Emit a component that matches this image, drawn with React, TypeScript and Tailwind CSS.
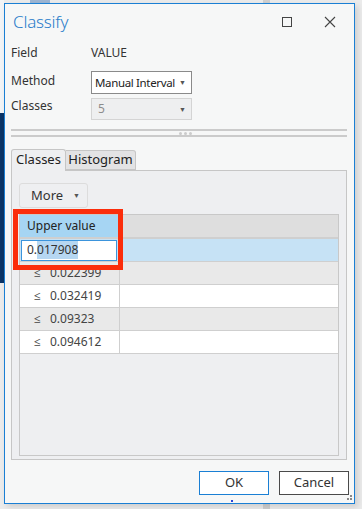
import React from "react";

const rows = [
  { v: "0.022399", bg: "bg-[#e9e9e9]" },
  { v: "0.032419", bg: "bg-white" },
  { v: "0.09323", bg: "bg-[#e9e9e9]" },
  { v: "0.094612", bg: "bg-white" },
];

const Caret = () => <span className="text-[7px] text-[#555] leading-none">▼</span>;

export default function App() {
  return (
    <div
      className="relative w-[362px] h-[509px] overflow-hidden bg-[#ebebeb] text-[12px] text-[#333]"
      style={{ fontFamily: '"Noto Sans", "Open Sans", sans-serif' }}
    >
      {/* desktop bits behind the window */}
      <div className="absolute left-0 top-0 w-[4px] h-[113px] bg-[#f2f4f6]" />
      <div className="absolute left-0 top-[113px] w-[4px] h-[170px] bg-[#0b3466]" />
      <div className="absolute left-[30px] top-0 w-[20px] h-[3px] bg-[#9cb5d3]" />
      <div className="absolute left-[263px] top-0 w-[7px] h-[3px] bg-[#cfcfcf]" />
      <div className="absolute left-[263px] top-[503px] w-[7px] h-[6px] bg-[#cfcfcf]" />

      {/* dialog window */}
      <div className="absolute left-[4px] top-[3px] w-[351px] h-[501px] border border-[#1a7fd4] bg-[#f6f7f7] shadow-[3px_3px_6px_rgba(0,0,0,0.12)] flex flex-col">
        {/* title bar */}
        <div className="flex items-center h-[35px] pl-[8px] pr-[15px]">
          <span className="text-[17px] text-[#2a7dca] font-light tracking-[-0.2px]">Classify</span>
          <div className="flex-1" />
          <div className="w-[10px] h-[10px] border border-[#444] mr-[32px]" />
          <svg width="12" height="12" viewBox="0 0 12 12" className="mr-[3px]">
            <path d="M1 1 L11 11 M11 1 L1 11" stroke="#444" strokeWidth="1.1" />
          </svg>
        </div>

        {/* form */}
        <div className="flex flex-col pl-[6px]">
          <div className="flex items-center h-[26px] mt-[1px]">
            <span className="w-[80px]">Field</span>
            <span>VALUE</span>
          </div>
          <div className="flex items-center h-[23px] mt-[5px]">
            <span className="w-[80px] -mt-[4px]">Method</span>
            <div className="w-[101px] h-[23px] border border-[#8a8a8a] bg-white flex items-center pl-[3px] pr-[5px] text-[#222] justify-between whitespace-nowrap">
              <span className="text-[11.5px] tracking-[-0.35px]">Manual Interval</span>
              <Caret />
            </div>
          </div>
          <div className="flex items-center h-[22px] mt-[4px]">
            <span className="w-[80px] -mt-[6px]">Classes</span>
            <div className="w-[101px] h-[22px] border border-[#d4d4d4] bg-[#eeeff0] flex items-center pl-[6px] pr-[5px] text-[#8c8c8c] justify-between">
              <span>5</span>
              <Caret />
            </div>
          </div>
        </div>

        {/* splitter */}
        <div className="flex flex-col ml-[6px] mr-[7px] mt-[9px]">
          <div className="h-[2px] bg-[#cbcbcb]" />
          <div className="h-[4px] flex items-center justify-center gap-[2px] pl-[12px]">
            <div className="w-[3px] h-[3px] rounded-full bg-[#cbcbcb]" />
            <div className="w-[3px] h-[3px] rounded-full bg-[#cbcbcb]" />
            <div className="w-[3px] h-[3px] rounded-full bg-[#cbcbcb]" />
          </div>
          <div className="h-[2px] bg-[#cbcbcb]" />
        </div>

        {/* tabs */}
        <div className="flex items-end ml-[6px] mt-[11px] h-[22px]">
          <div className="h-[22px] w-[55px] border border-b-0 border-[#c6c6c6] rounded-t-[3px] bg-[#eeeff1] flex items-center justify-center text-[13px] text-[#222] relative z-10 -mb-px pb-[1px]">
            Classes
          </div>
          <div className="h-[20px] w-[70px] border border-l-0 border-[#c6c6c6] rounded-tr-[3px] bg-[#e3e3e4] flex items-center justify-center text-[13px] text-[#222]">
            Histogram
          </div>
        </div>

        {/* tab panel */}
        <div className="ml-[6px] mr-[7px] h-[290px] border border-[#c6c6c6] bg-[#eeeff1] flex flex-col pl-[7px] pr-[7px] pt-[12px]">
          <div className="w-[69px] h-[25px] border border-[#dcdcdc] rounded-[3px] flex items-center pl-[11px] pr-[7px] justify-between text-[13px] text-[#333]">
            <span>More</span>
            <Caret />
          </div>

          <div className="mt-[6px] h-[242px] border border-[#c8c8c8] flex flex-col">
            <div className="flex h-[24px] border-b-2 border-[#cfcfcf]">
              <div className="w-[99px] bg-[#a6d5f3] flex items-center pl-[7px] text-[#222]">Upper value</div>
              <div className="flex-1 bg-[#dedede]" />
            </div>
            <div className="flex h-[23px] bg-[#c6e2f5] border-b border-[#cfcfcf]">
              <div className="w-[99px] flex items-center pl-[1px]">
                <div className="w-[96px] h-[21px] bg-white border border-[#3b94dc] flex items-center pl-[5px] text-[#333]">
                  <span>0.</span>
                  <span className="bg-[#b6d7f2]">017908</span>
                </div>
              </div>
            </div>
            {rows.map((r) => (
              <div key={r.v} className={`flex h-[23px] border-b border-[#cfcfcf] ${r.bg}`}>
                <div className="w-[100px] border-r border-[#cfcfcf] flex items-center pl-[14px] text-[#444]">
                  <span className="w-[16px]">≤</span>
                  <span>{r.v}</span>
                </div>
                <div className="flex-1" />
              </div>
            ))}
          </div>

          {/* annotation box */}
          <div className="absolute left-[8px] top-[205px] w-[110px] h-[61px] border-[5px] border-[#fb2d0b]" />
        </div>

        {/* footer buttons */}
        <div className="flex justify-end gap-[10px] mt-[11px] pr-[5px]">
          <div className="w-[70px] h-[24px] border border-[#1a7fd4] bg-white flex items-center justify-center text-[#333] text-[13px]">
            OK
          </div>
          <div className="w-[70px] h-[24px] border border-[#4a4a4a] bg-white flex items-center justify-center text-[#333] text-[13px]">
            Cancel
          </div>
        </div>
        <div className="absolute left-[226px] top-[496px] w-[2px] h-[2px] bg-[#2a44d8]" />
        <div className="absolute right-[2px] bottom-[3px] grid grid-cols-3 gap-[1px]">
          <div />
          <div />
          <div className="w-[2px] h-[2px] bg-[#888]" />
          <div />
          <div className="w-[2px] h-[2px] bg-[#888]" />
          <div className="w-[2px] h-[2px] bg-[#888]" />
        </div>
      </div>
    </div>
  );
}
